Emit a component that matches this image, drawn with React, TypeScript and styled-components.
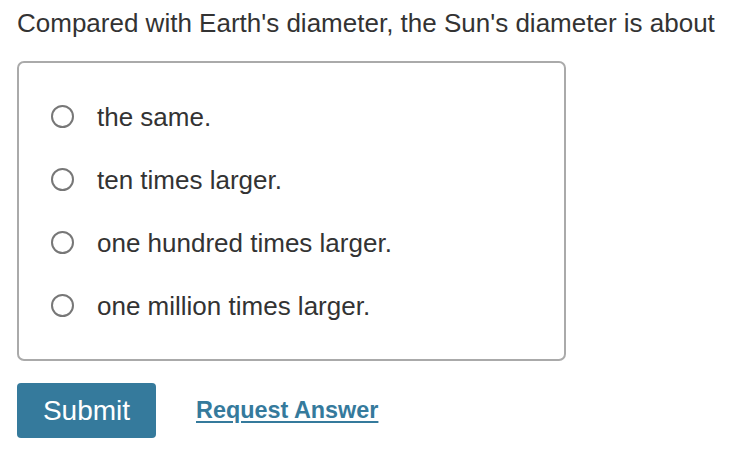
import React, { useState } from 'react';
import styled, { createGlobalStyle } from 'styled-components';

const GlobalStyle = createGlobalStyle`
  body {
    margin: 0;
    background: #ffffff;
    font-family: "Liberation Sans", Arial, Helvetica, sans-serif;
    color: #333333;
  }
`;

const Page = styled.div`
  padding: 8px 17px;
`;

const Question = styled.div`
  font-size: 26px;
  line-height: 30px;
  margin-bottom: 23px;
  white-space: nowrap;
`;

const ChoiceBox = styled.div`
  width: 545px;
  border: 2px solid #aaaaaa;
  border-radius: 7px;
  padding: 22px 0;
`;

const Choice = styled.label`
  display: flex;
  align-items: center;
  height: 63px;
  padding-left: 32px;
  cursor: pointer;
`;

const Radio = styled.span<{ checked: boolean }>`
  box-sizing: border-box;
  width: 23px;
  height: 23px;
  border-radius: 50%;
  border: 2px solid #777777;
  margin-right: 23px;
  flex-shrink: 0;
  display: flex;
  align-items: center;
  justify-content: center;

  &::after {
    content: '';
    display: ${(p) => (p.checked ? 'block' : 'none')};
    width: 11px;
    height: 11px;
    border-radius: 50%;
    background: #357a9c;
  }
`;

const ChoiceText = styled.span`
  font-size: 26px;
  line-height: 30px;
`;

const Actions = styled.div`
  display: flex;
  align-items: center;
  margin-top: 22px;
  gap: 40px;
`;

const SubmitButton = styled.button`
  width: 139px;
  height: 55px;
  border: none;
  border-radius: 4px;
  background: #357a9c;
  color: #ffffff;
  font-family: "Liberation Sans", Arial, sans-serif;
  font-size: 28px;
  padding: 0;
  cursor: pointer;
`;

const RequestLink = styled.a`
  font-size: 23.4px;
  font-weight: bold;
  color: #357a9c;
  text-decoration: underline;
  text-underline-offset: 3px;
  text-decoration-thickness: 2px;
  cursor: pointer;
  margin-top: -1px;
`;

const choices = [
  'the same.',
  'ten times larger.',
  'one hundred times larger.',
  'one million times larger.',
];

export default function App() {
  const [picked, setPicked] = useState<number | null>(null);

  return (
    <Page>
      <GlobalStyle />
      <Question>Compared with Earth's diameter, the Sun's diameter is about</Question>
      <ChoiceBox>
        {choices.map((c, i) => (
          <Choice key={i} onClick={() => setPicked(i)}>
            <Radio checked={picked === i} />
            <ChoiceText>{c}</ChoiceText>
          </Choice>
        ))}
      </ChoiceBox>
      <Actions>
        <SubmitButton>Submit</SubmitButton>
        <RequestLink>Request Answer</RequestLink>
      </Actions>
    </Page>
  );
}
